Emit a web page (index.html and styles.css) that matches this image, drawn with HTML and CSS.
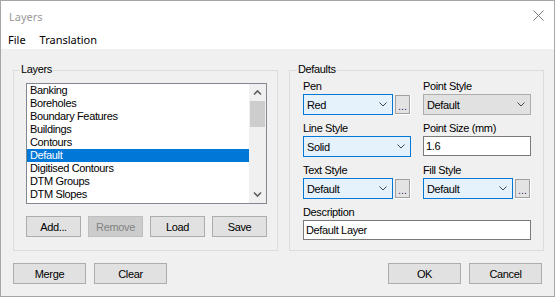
FILE: index.html
```html
<!DOCTYPE html>
<html>
<head>
<meta charset="utf-8">
<link rel="stylesheet" href="styles.css">
</head>
<body>
<div class="window">
  <div class="titlebar">
    <span class="title">Layers</span>
    <svg class="close" width="11" height="11" viewBox="0 0 11 11"><path d="M0.5 0.5 L10.5 10.5 M10.5 0.5 L0.5 10.5" stroke="#7a7a7a" stroke-width="1" fill="none"/></svg>
  </div>
  <div class="menubar">
    <span class="menu-item">File</span>
    <span class="menu-item">Translation</span>
  </div>
  <div class="content">
    <div class="groups">
      <div class="group group-layers">
        <span class="legend">Layers</span>
        <div class="listbox">
          <ul class="items">
            <li>Banking</li>
            <li>Boreholes</li>
            <li>Boundary Features</li>
            <li>Buildings</li>
            <li>Contours</li>
            <li class="selected">Default</li>
            <li>Digitised Contours</li>
            <li>DTM Groups</li>
            <li>DTM Slopes</li>
          </ul>
          <div class="scrollbar">
            <svg class="sb-btn" width="17" height="17" viewBox="0 0 17 17"><path d="M5 10.5 L8.5 7 L12 10.5" stroke="#606060" stroke-width="1.6" fill="none"/></svg>
            <div class="track"><div class="thumb"></div></div>
            <svg class="sb-btn" width="17" height="17" viewBox="0 0 17 17"><path d="M5 6.5 L8.5 10 L12 6.5" stroke="#606060" stroke-width="1.6" fill="none"/></svg>
          </div>
        </div>
        <div class="btn-row">
          <button class="btn small">Add...</button>
          <button class="btn small disabled">Remove</button>
          <button class="btn small">Load</button>
          <button class="btn small">Save</button>
        </div>
      </div>
      <div class="group group-defaults">
        <span class="legend legend-defaults">Defaults</span>
        <div class="fields">
          <div class="field">
            <span class="label">Pen</span>
            <div class="combo-row">
              <div class="combo active short"><span>Red</span><svg width="8" height="5" viewBox="0 0 8 5"><path d="M0.5 0.5 L4 4 L7.5 0.5" stroke="#444" stroke-width="1" fill="none"/></svg></div>
              <div class="ellipsis">...</div>
            </div>
          </div>
          <div class="field">
            <span class="label">Point Style</span>
            <div class="combo plain"><span>Default</span><svg width="8" height="5" viewBox="0 0 8 5"><path d="M0.5 0.5 L4 4 L7.5 0.5" stroke="#444" stroke-width="1" fill="none"/></svg></div>
          </div>
          <div class="field">
            <span class="label">Line Style</span>
            <div class="combo active"><span>Solid</span><svg width="8" height="5" viewBox="0 0 8 5"><path d="M0.5 0.5 L4 4 L7.5 0.5" stroke="#444" stroke-width="1" fill="none"/></svg></div>
          </div>
          <div class="field">
            <span class="label">Point Size (mm)</span>
            <div class="textbox">1.6</div>
          </div>
          <div class="field">
            <span class="label">Text Style</span>
            <div class="combo-row">
              <div class="combo active short"><span>Default</span><svg width="8" height="5" viewBox="0 0 8 5"><path d="M0.5 0.5 L4 4 L7.5 0.5" stroke="#444" stroke-width="1" fill="none"/></svg></div>
              <div class="ellipsis">...</div>
            </div>
          </div>
          <div class="field">
            <span class="label">Fill Style</span>
            <div class="combo-row">
              <div class="combo active short"><span>Default</span><svg width="8" height="5" viewBox="0 0 8 5"><path d="M0.5 0.5 L4 4 L7.5 0.5" stroke="#444" stroke-width="1" fill="none"/></svg></div>
              <div class="ellipsis">...</div>
            </div>
          </div>
          <div class="field span2">
            <span class="label">Description</span>
            <div class="textbox">Default Layer</div>
          </div>
        </div>
      </div>
    </div>
    <div class="bottom-row">
      <div class="btn-group">
        <button class="btn wide">Merge</button>
        <button class="btn wide">Clear</button>
      </div>
      <div class="btn-group">
        <button class="btn wide">OK</button>
        <button class="btn wide">Cancel</button>
      </div>
    </div>
  </div>
</div>
</body>
</html>
```

FILE: styles.css
```css
html, body {
  margin: 0;
  padding: 0;
  background: #ffffff;
}

body {
  font-family: "Liberation Sans", Arial, sans-serif;
  font-size: 11px;
  letter-spacing: -0.35px;
  color: #000;
}

.window {
  width: 555px;
  height: 297px;
  box-sizing: border-box;
  border: 1px solid #a6a6a6;
  background: #f0f0f0;
  display: flex;
  flex-direction: column;
}

.titlebar {
  height: 30px;
  flex: none;
  background: #fff;
  display: flex;
  align-items: center;
  justify-content: space-between;
  padding: 0 10px 0 8px;
}

.title {
  font-family: "Noto Sans", "Open Sans", sans-serif;
  font-size: 11px;
  letter-spacing: 0;
  color: #999999;
}

.close {
  display: block;
  margin-top: -1px;
}

.menubar {
  height: 18px;
  flex: none;
  background: #fff;
  display: flex;
  font-family: "Noto Sans", "Open Sans", sans-serif;
  font-size: 11px;
  letter-spacing: 0;
}

.menu-item {
  padding: 0 7px;
  line-height: 18px;
}

.content {
  flex: 1;
  padding: 21px 10px 0 12px;
}

.groups {
  display: flex;
  gap: 11px;
  height: 181px;
}

.group {
  position: relative;
  box-sizing: border-box;
  border: 1px solid #dcdcdc;
}

.legend {
  position: absolute;
  top: -8px;
  left: 6px;
  padding: 0 1px;
  line-height: 13px;
  background: #f0f0f0;
}

.legend-defaults {
  left: 7px;
}

.group-layers {
  width: 265px;
  padding: 12px 0 0 12px;
}

.listbox {
  width: 241px;
  height: 121px;
  box-sizing: border-box;
  border: 1px solid #828790;
  background: #fff;
  display: flex;
}

.items {
  flex: 1;
  list-style: none;
  margin: 0;
  padding: 0;
}

.items li {
  height: 13px;
  line-height: 13px;
  padding-left: 3px;
  white-space: nowrap;
}

.items li.selected {
  background: #0078d7;
  color: #fff;
}

.scrollbar {
  width: 17px;
  background: #f0f0f0;
  display: flex;
  flex-direction: column;
}

.sb-btn {
  display: block;
  flex: none;
}

.track {
  flex: 1;
  padding: 0 1px;
}

.thumb {
  height: 26px;
  background: #cdcdcd;
}

.btn-row {
  width: 241px;
  display: flex;
  justify-content: space-between;
  margin-top: 12px;
}

.btn {
  box-sizing: border-box;
  height: 21px;
  padding: 0;
  border: 1px solid #adadad;
  background: #e1e1e1;
  font-family: "Liberation Sans", Arial, sans-serif;
  font-size: 11px;
  letter-spacing: -0.35px;
  color: #000;
}

.btn.small {
  width: 55px;
}

.btn.wide {
  width: 73px;
}

.btn.disabled {
  background: #cccccc;
  border-color: #bfbfbf;
  color: #838383;
}

.group-defaults {
  width: 255px;
  padding: 9px 0 0 13px;
}

.fields {
  display: grid;
  grid-template-columns: 108px 108px;
  column-gap: 12px;
  row-gap: 7px;
}

.field {
  display: flex;
  flex-direction: column;
  gap: 1px;
}

.field.span2 {
  grid-column: 1 / 3;
}

.label {
  line-height: 13px;
  height: 13px;
}

.combo-row {
  display: flex;
  gap: 1px;
}

.combo {
  box-sizing: border-box;
  height: 21px;
  display: flex;
  align-items: center;
  justify-content: space-between;
  padding: 0 5px 0 3px;
  border: 1px solid #0078d7;
  background: #e5f1fb;
}

.combo.short {
  width: 90px;
}

.combo.plain {
  border-color: #adadad;
  background: #e1e1e1;
}

.combo svg {
  display: block;
}

.ellipsis {
  box-sizing: border-box;
  width: 17px;
  height: 21px;
  border: 1px solid #ffffff;
  border-top-color: #f0f0f0;
  border-left-color: #f0f0f0;
  box-shadow: inset 0 0 0 1px #a0a0a0;
  background: #e3e3e3;
  display: flex;
  align-items: flex-end;
  justify-content: center;
  padding-bottom: 2px;
  line-height: 11px;
  letter-spacing: 0;
  color: #4b1e6e;
}

.textbox {
  box-sizing: border-box;
  height: 20px;
  display: flex;
  align-items: center;
  padding-left: 2px;
  border: 1px solid #7a7a7a;
  background: #fff;
}

.bottom-row {
  display: flex;
  justify-content: space-between;
  margin-top: 12px;
  margin-right: 2px;
}

.btn-group {
  display: flex;
  gap: 8px;
}
```
